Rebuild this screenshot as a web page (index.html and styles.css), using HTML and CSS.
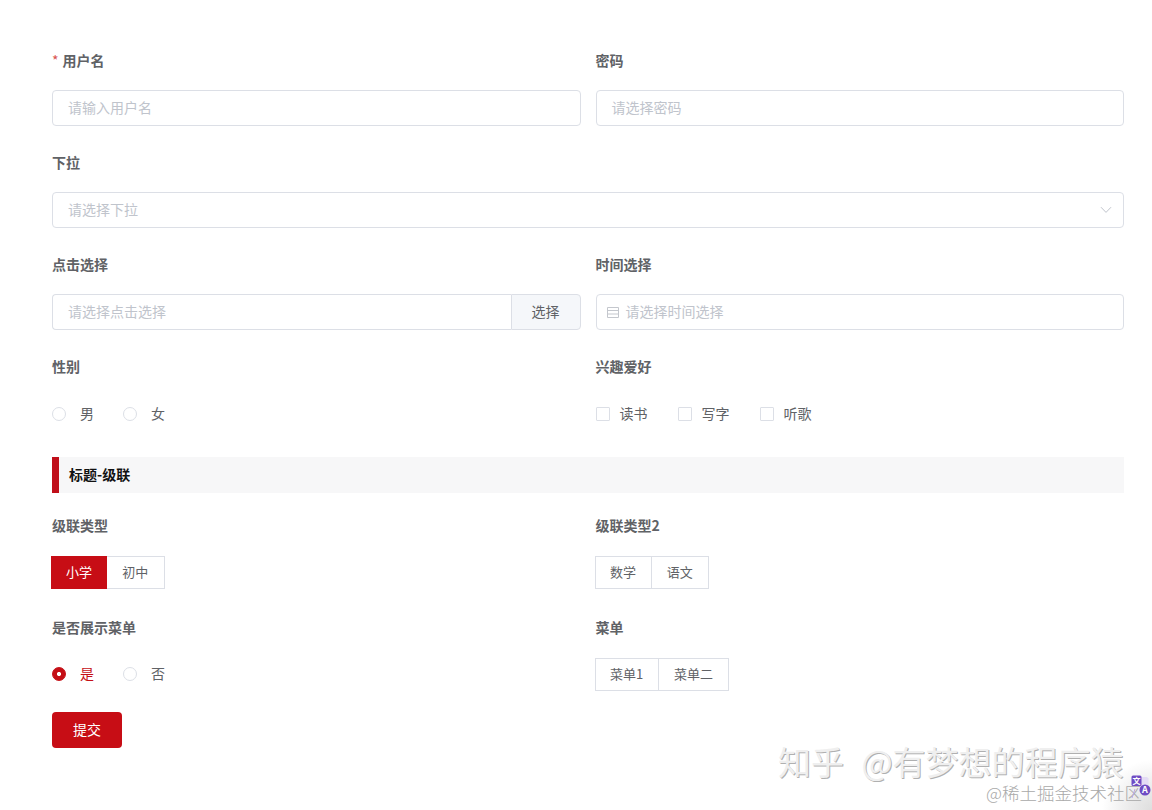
FILE: index.html
```html
<!DOCTYPE html>
<html lang="zh-CN">
<head>
<meta charset="utf-8">
<title>表单</title>
<link rel="stylesheet" href="styles.css">
</head>
<body>
<form class="form">
  <div class="grid">
    <div class="item">
      <div class="label"><span class="req">*</span>用户名</div>
      <div class="input"><span class="ph">请输入用户名</span></div>
    </div>
    <div class="item">
      <div class="label">密码</div>
      <div class="input"><span class="ph">请选择密码</span></div>
    </div>
    <div class="item wide">
      <div class="label">下拉</div>
      <div class="input select">
        <span class="ph">请选择下拉</span>
        <svg class="chev" width="12" height="8" viewBox="0 0 12 8"><path d="M1 1.2 6 6.4 11 1.2" fill="none" stroke="#c0c4cc" stroke-width="1"/></svg>
      </div>
    </div>
    <div class="item">
      <div class="label">点击选择</div>
      <div class="group">
        <div class="input joined"><span class="ph">请选择点击选择</span></div>
        <div class="append">选择</div>
      </div>
    </div>
    <div class="item">
      <div class="label">时间选择</div>
      <div class="input date">
        <svg class="cal" width="14" height="14" viewBox="0 0 14 14"><path d="M1.5 2.5h11v10h-11zM1.5 5.5h11M1.5 9h11" fill="none" stroke="#c4c7cd" stroke-width="1"/></svg>
        <span class="ph">请选择时间选择</span>
      </div>
    </div>
    <div class="item">
      <div class="label">性别</div>
      <div class="choices radios">
        <span class="choice"><i class="radio"></i>男</span>
        <span class="choice"><i class="radio"></i>女</span>
      </div>
    </div>
    <div class="item">
      <div class="label">兴趣爱好</div>
      <div class="choices checks">
        <span class="choice"><i class="check"></i>读书</span>
        <span class="choice"><i class="check"></i>写字</span>
        <span class="choice"><i class="check"></i>听歌</span>
      </div>
    </div>
  </div>

  <div class="section">标题-级联</div>

  <div class="grid">
    <div class="item">
      <div class="label">级联类型</div>
      <div class="buttons">
        <span class="btn on">小学</span><span class="btn">初中</span>
      </div>
    </div>
    <div class="item">
      <div class="label">级联类型2</div>
      <div class="buttons">
        <span class="btn">数学</span><span class="btn">语文</span>
      </div>
    </div>
    <div class="item">
      <div class="label">是否展示菜单</div>
      <div class="choices radios raised">
        <span class="choice active"><i class="radio"></i>是</span>
        <span class="choice"><i class="radio"></i>否</span>
      </div>
    </div>
    <div class="item">
      <div class="label">菜单</div>
      <div class="buttons">
        <span class="btn">菜单1</span><span class="btn">菜单二</span>
      </div>
    </div>
  </div>

  <div class="submit">提交</div>
</form>

<div class="corner"></div>
<div class="mark-zhihu">知乎 @有梦想的程序猿</div>
<div class="mark-juejin">@稀土掘金技术社区</div>
<svg class="translate" width="20" height="24" viewBox="0 0 20 24">
  <path d="M9 2h7l1.5 1.5V12H9z" fill="#e4dcf5"/>
  <rect x="0.5" y="0.5" width="10" height="10.5" rx="1.5" fill="#6f4cc4"/>
  <path d="M4 14 1 23" stroke="#b9a8e6" stroke-width="1" fill="none"/>
  <circle cx="14" cy="15" r="5.5" fill="#6f4cc4"/>
  <text class="tr-a" x="5.5" y="8.6" text-anchor="middle">文</text>
  <text class="tr-b" x="14" y="18" text-anchor="middle">A</text>
</svg>
</body>
</html>
```

FILE: styles.css
```css
* { box-sizing: border-box; }
html, body { margin: 0; height: 810px; overflow: hidden; background: #fff; }
body {
  position: relative;
  font-family: "Noto Sans CJK SC", "Noto Sans", sans-serif;
  font-size: 14px;
  color: #606266;
}
.form { height: 810px; overflow: hidden; padding: 50px 28px 0 52px; display: flex; flex-direction: column; align-items: stretch; }
.grid { display: grid; grid-template-columns: 1fr 1fr; column-gap: 15px; row-gap: 26px; }
.wide { grid-column: 1 / -1; }
.label { height: 22px; line-height: 20px; margin-bottom: 18px; font-weight: 700; color: #606266; }
.req { color: #d9534f; font-weight: 400; margin-right: 4px; }
.input {
  height: 36px; display: flex; align-items: center;
  padding: 0 15px 2px; background: #fff;
  border: 1px solid #dcdfe6; border-radius: 4px;
}
.ph { color: #c0c4cc; }
.select { justify-content: space-between; padding-right: 11px; }
.chev { margin-top: 2px; }
.date { padding-left: 9px; gap: 6px; }
.cal { margin-top: 2px; }
.group { display: flex; height: 36px; }
.joined { flex: 1; border-radius: 4px 0 0 4px; border-right: 0; }
.append {
  width: 70px; display: flex; align-items: center; justify-content: center;
  padding-bottom: 2px;
  background: #f5f7fa; border: 1px solid #dcdfe6; border-radius: 0 4px 4px 0;
}
.choices { height: 36px; display: flex; align-items: center; }
.raised { margin: -1px 0 1px; }
.choice { display: flex; align-items: center; line-height: 20px; padding-bottom: 2px; }
.radios { gap: 29px; }
.checks { gap: 30px; }
.radio {
  width: 14px; height: 14px; margin: 2px 14px 0 0; border-radius: 50%;
  border: 1px solid #dcdfe6; background: #fff;
}
.check { width: 14px; height: 14px; margin: 2px 10px 0 0; border: 1px solid #dcdfe6; border-radius: 1px; background: #fff; }
.active { color: #c50f16; }
.active .radio {
  border-color: #c50f16;
  background: radial-gradient(circle, #fff 0 1.7px, #c50f16 2.4px);
}
.section {
  height: 36px; line-height: 34px; margin: 25px 0 22px;
  padding-left: 10px; background: #f7f7f8;
  border-left: 7px solid #c00f1a;
  color: #111; font-weight: 700;
}
.buttons { height: 36px; display: flex; align-items: flex-start; padding-top: 1px; margin-left: -1px; }
.btn {
  height: 33px; line-height: 29px; padding: 0 14.5px; font-size: 13px;
  border: 1px solid #dcdfe6; background: #fff; color: #606266;
}
.btn + .btn { border-left: 0; padding: 0 15.25px; }
.on { padding: 0 14px; background: #c70d15; border-color: #c70d15; color: #fff; }
.submit {
  width: 70px; height: 36px; flex: none; margin-top: 19px; line-height: 34px; text-align: center;
  background: #c70d15; color: #fff; border-radius: 4px;
}
.corner {
  position: absolute; right: 0; bottom: 0; width: 50px; height: 50px;
  background: radial-gradient(circle 50px at 100% 100%, #dedede 0%, #ebebeb 45%, #ffffff 100%);
}
.mark-zhihu {
  position: absolute; left: 778px; top: 743px;
  font-size: 33px; line-height: 36px; white-space: nowrap; word-spacing: 10px;
  color: #efefef; text-shadow: 1px 1px 0 #b0b0b0;
}
.mark-juejin {
  position: absolute; left: 986px; top: 783px;
  font-size: 17.5px; line-height: 20px; white-space: nowrap; font-weight: 300;
  color: #a9a9a9;
}
.translate { position: absolute; left: 1131px; top: 775px; }
.tr-a { font-size: 8px; font-weight: 700; fill: #fff; }
.tr-b { font-size: 9px; font-weight: 700; fill: #fff; }
```
